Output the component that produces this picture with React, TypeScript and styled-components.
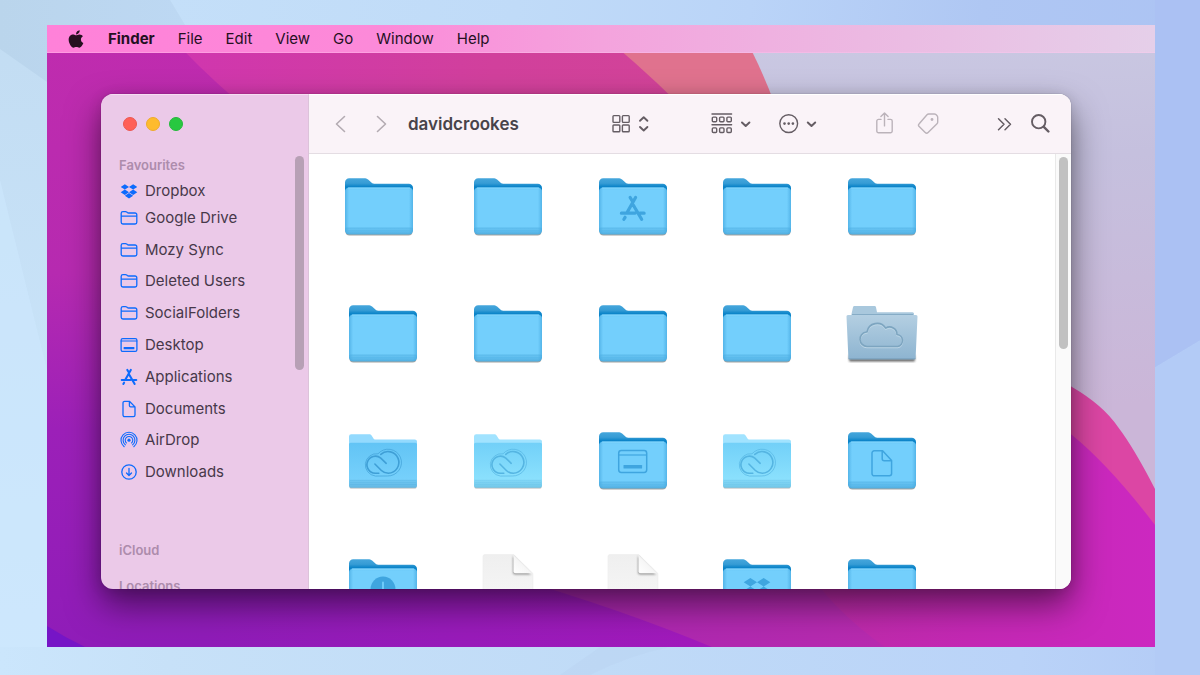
import React from "react";
import styled, { createGlobalStyle } from "styled-components";
import { FaApple } from "react-icons/fa";

const GlobalStyle = createGlobalStyle`
  *, *::before, *::after { box-sizing: border-box; }
  body {
    margin: 0;
    font-family: Inter, "Liberation Sans", sans-serif;
    -webkit-font-smoothing: antialiased;
  }
  button { font: inherit; color: inherit; background: none; border: 0; padding: 0; }
  ul { list-style: none; margin: 0; padding: 0; }
  a { color: inherit; text-decoration: none; }
  svg { display: block; flex: none; }
`;

/* ---------- page and desktop ---------- */

const Page = styled.div`
  position: relative;
  display: flex;
  height: 100vh;
  padding: 25px 45px 28px 47px;
  background: linear-gradient(98deg, #c6e1f9 0%, #c0dbf8 40%, #bad4f8 58%, #afc7f3 76%, #abc2f3 100%);
  overflow: hidden;
`;

const Backdrop = styled.svg`
  position: absolute;
  inset: 0;
  width: 100%;
  height: 100%;
`;

const Defs = styled.svg`
  position: absolute;
  width: 0;
  height: 0;
`;

const Desktop = styled.div`
  position: relative;
  flex: 1;
  display: flex;
  flex-direction: column;
  min-width: 0;
  overflow: hidden;
`;

const MenuBar = styled.header`
  position: relative;
  display: flex;
  align-items: center;
  gap: 23px;
  flex: none;
  height: 28px;
  padding: 0 20px;
  color: #25101f;
  font-size: 15px;
  line-height: 20px;
  background: linear-gradient(90deg, #ff81d9 0%, #fc8ad9 30%, #f4a3dd 50%, #ecb9e2 74%, #e5cfe9 100%);
  border-bottom: 1px solid rgba(255, 200, 240, 0.35);
`;

const AppleButton = styled.button`
  display: flex;
  justify-content: center;
  width: 18px;
`;

const MenuButton = styled.button<{ $strong?: boolean }>`
  font-weight: ${(p) => (p.$strong ? 700 : 400)};
`;

const Window = styled.section`
  position: relative;
  flex: 1;
  display: flex;
  min-height: 0;
  margin: 41px 84px 58px 54px;
  border-radius: 12px;
  box-shadow:
    0 0 1px rgba(0, 0, 0, 0.5),
    0 16px 34px rgba(0, 0, 0, 0.5),
    0 2px 14px rgba(0, 0, 0, 0.12);
`;

const WindowBody = styled.div`
  flex: 1;
  display: flex;
  min-width: 0;
  border-radius: inherit;
  overflow: hidden;
`;

/* ---------- sidebar ---------- */

const Sidebar = styled.aside`
  display: flex;
  flex-direction: column;
  flex: none;
  width: 208px;
  background: #ebc9e8;
  border-top: 1px solid #f5dff2;
  border-right: 1px solid #dcc3da;
`;

const TrafficLights = styled.div`
  display: flex;
  align-items: center;
  gap: 9px;
  flex: none;
  height: 58px;
  padding-left: 22px;
`;

const Light = styled.button<{ $fill: string; $edge: string }>`
  width: 14px;
  height: 14px;
  border-radius: 50%;
  background: ${(p) => p.$fill};
  border: 1px solid ${(p) => p.$edge};
`;

const SidebarScroll = styled.div`
  flex: 1;
  display: flex;
  justify-content: space-between;
  min-height: 0;
  padding: 3px 4px 0 18px;
  overflow: hidden;
`;

const Thumb = styled.div<{ $tone: string; $size: string }>`
  flex: none;
  width: 9px;
  height: ${(p) => p.$size};
  border-radius: 5px;
  background: ${(p) => p.$tone};
`;

const SectionTitle = styled.h2<{ $space?: number }>`
  margin: ${(p) => p.$space ?? 0}px 0 0;
  font-size: 13px;
  line-height: 18px;
  font-weight: 600;
  color: #ad8cac;
`;

const PlaceLink = styled.a`
  display: flex;
  align-items: center;
  gap: 7px;
  height: 100%;
  padding-left: 1px;
  font-size: 15px;
  line-height: 20px;
  color: #47384a;
  white-space: nowrap;

  svg { color: #0d6bfd; }
`;

const PinnedPlace = styled.div`
  height: 22px;
  margin-top: 6px;
`;

const PlaceList = styled.ul`
  display: grid;
  grid-template-rows: repeat(9, 1fr);
  height: 286px;
`;

/* ---------- main pane ---------- */

const Main = styled.main`
  flex: 1;
  display: flex;
  flex-direction: column;
  min-width: 0;
  background: #fff;
`;

const Toolbar = styled.div`
  display: flex;
  align-items: center;
  flex: none;
  height: 60px;
  padding: 0 21px 0 26px;
  background: #faf3f8;
  border-top: 1px solid #fff;
  border-bottom: 1px solid #e4dde3;
  color: #655d64;
`;

const HistoryButtons = styled.div`
  display: flex;
  gap: 30px;
  color: #b3abb2;
`;

const FolderTitle = styled.h1`
  flex: 1;
  margin: 0 0 0 21px;
  font-size: 17px;
  line-height: 22px;
  font-weight: 600;
  color: #48434a;
`;

const ToolGroups = styled.div`
  display: flex;
  gap: 58px;
`;

const ToolGroup = styled.div<{ $gap: number; $dim?: boolean }>`
  display: flex;
  align-items: center;
  gap: ${(p) => p.$gap}px;
  color: ${(p) => (p.$dim ? "#bbb3ba" : "inherit")};
`;

const Content = styled.div`
  flex: 1;
  display: flex;
  justify-content: space-between;
  min-height: 0;
  overflow: hidden;
`;

const FileGrid = styled.ul`
  display: grid;
  grid-template-columns: repeat(5, 76px);
  grid-auto-rows: 68px;
  row-gap: 59px;
  justify-content: space-between;
  align-content: start;
  align-items: center;
  justify-items: center;
  width: 575px;
  margin: 19px 0 0 36px;
`;

const FileItem = styled.li<{ $side?: string }>`
  justify-self: ${(p) => p.$side ?? "center"};
`;

const FileButton = styled.button`
  display: block;
`;

const ScrollTrack = styled.div`
  flex: none;
  width: 16px;
  padding: 3px 0 0 3px;
  background: #fafafa;
  border-left: 1px solid #e9e9e9;
`;

/* ---------- small icons ---------- */

const stroke = {
  fill: "none",
  stroke: "currentColor",
  strokeLinecap: "round" as const,
  strokeLinejoin: "round" as const,
};

const DROPBOX =
  "M6 1.8 0 5.6l6 3.85 6-3.85L6 1.8zM18 1.8l-6 3.8 6 3.85 6-3.85-6-3.8zM0 13.3l6 3.8 6-3.8-6-3.85-6 3.85zM18 9.45l-6 3.85 6 3.8 6-3.8-6-3.85zM6 18.4l6 3.8 6-3.8-6-3.85-6 3.85z";
const APPS =
  "M14.6 1.8 7 15.3M9.6 1.8 11.4 4.9M1.5 16.4H14M12.6 9 20.2 22M18.6 16.4H22.5M4.9 20.2 3.8 22";

const DropboxIcon = () => (
  <svg width="18" height="18" viewBox="-1 -1.5 26 26"><path d={DROPBOX} fill="currentColor" /></svg>
);
const FolderIcon = () => (
  <svg width="18" height="18" viewBox="0 0 18 18">
    <path {...stroke} strokeWidth="1.3" d="M1.2 4.2A1.7 1.7 0 0 1 2.9 2.6h2.6c.6 0 .9.1 1.3.5l.7.6c.3.2.5.3 1 .3h6.6a1.7 1.7 0 0 1 1.7 1.7v7.600a1.700 1.700 0 0 1-1.700 1.700H2.900a1.700 1.700 0 0 1-1.700-1.700zM1.200 7.200h15.600" />
  </svg>
);
const DesktopIcon = () => (
  <svg width="18" height="18" viewBox="0 0 18 18">
    <rect {...stroke} strokeWidth="1.300" x="1.100" y="2.600" width="15.800" height="12.800" rx="1.600" />
    <path {...stroke} strokeWidth="1.100" d="M1.200 5h15.600" />
    <rect x="3.600" y="11" width="10.800" height="2.300" rx=".5" fill="currentColor" />
  </svg>
);
const AppsIcon = () => (
  <svg width="18" height="18" viewBox="-1 -1 26 26"><path {...stroke} strokeWidth="3" d={APPS} /></svg>
);
const DocumentIcon = () => (
  <svg width="18" height="18" viewBox="0 0 18 18">
    <path {...stroke} strokeWidth="1.3" d="M4.600 1.300h4.800L15 6.900v8.200a1.600 1.600 0 0 1-1.600 1.600H4.600A1.600 1.600 0 0 1 3 15.100V2.900a1.600 1.600 0 0 1 1.600-1.600zM9.400 1.500v4a1.300 1.300 0 0 0 1.300 1.300h4" />
  </svg>
);
const AirDropIcon = () => (
  <svg width="18" height="18" viewBox="0 0 18 18">
    <g {...stroke} strokeWidth="1.1">
      <path d="M4.200 15.700a8 8 0 1 1 9.600 0" />
      <path d="M5.300 13.800a5.900 5.900 0 1 1 7.400 0" />
      <path d="M6.400 12a3.800 3.800 0 1 1 5.200 0" />
    </g>
    <circle cx="9" cy="9.200" r="1.600" fill="currentColor" />
  </svg>
);
const DownloadIcon = () => (
  <svg width="18" height="18" viewBox="0 0 18 18">
    <circle {...stroke} strokeWidth="1.3" cx="9" cy="9" r="7.200" />
    <path {...stroke} strokeWidth="1.3" d="M9 5.300v7M6.500 10 9 12.500 11.500 10" />
  </svg>
);

const Chevron = ({ flip }: { flip?: boolean }) => (
  <svg width="11" height="20" viewBox="0 0 11 20">
    <path {...stroke} strokeWidth="1.6" d={flip ? "M1.500 2.500 9.500 10 1.500 17.500" : "M9.500 2.500 1.500 10 9.500 17.500"} />
  </svg>
);
const GridViewIcon = () => (
  <svg width="41" height="22" viewBox="0 0 41 22">
    <g {...stroke} strokeWidth="1.4">
      <rect x="1" y="2.600" width="6.800" height="6.800" rx=".8" />
      <rect x="10.400" y="2.600" width="6.800" height="6.800" rx=".8" />
      <rect x="1" y="12" width="6.800" height="6.800" rx=".8" />
      <rect x="10.400" y="12" width="6.800" height="6.800" rx=".8" />
    </g>
    <path {...stroke} strokeWidth="1.9" d="M28 7.800 31.700 4.300 35.400 7.800M28 14 31.700 17.500 35.400 14" />
  </svg>
);
const GroupIcon = () => (
  <svg width="40" height="22" viewBox="0 0 40 22">
    <g {...stroke} strokeWidth="1.4">
      <path d="M1 1h19.600M1 11.800h19.600" />
      {[1.3, 8.6, 15.9].map((x) => (
        <React.Fragment key={x}>
          <rect x={x} y="4.100" width="4.400" height="4.600" rx="1" />
          <rect x={x} y="14.900" width="4.400" height="4.600" rx="1" />
        </React.Fragment>
      ))}
    </g>
    <path {...stroke} strokeWidth="2" d="M31 9.500 34.700 12.900 38.400 9.500" />
  </svg>
);
const ActionIcon = () => (
  <svg width="38" height="22" viewBox="0 0 38 22">
    <circle {...stroke} strokeWidth="1.4" cx="9.700" cy="10.600" r="8.900" />
    <g fill="currentColor">
      <circle cx="5.500" cy="10.600" r="1.300" />
      <circle cx="9.700" cy="10.600" r="1.300" />
      <circle cx="13.900" cy="10.600" r="1.300" />
    </g>
    <path {...stroke} strokeWidth="2" d="M28.800 9.500 32.500 12.900 36.200 9.500" />
  </svg>
);
const ShareIcon = () => (
  <svg width="18" height="24" viewBox="-1 0 18 24">
    <path {...stroke} strokeWidth="1.4" d="M5 7.400H2.500A1.700 1.700 0 0 0 .8 9.100v10a1.700 1.700 0 0 0 1.700 1.700h12a1.700 1.700 0 0 0 1.700-1.700v-10A1.700 1.700 0 0 0 14.500 7.400H12M8.500 13.900V1.200M4.900 4.600 8.500 1l3.600 3.600" />
  </svg>
);
const TagIcon = () => (
  <svg width="22" height="24" viewBox="0 0 22 24">
    <path {...stroke} strokeWidth="1.4" d="M11.600 2h5.700c.7 0 1.200.2 1.600.6l1.200 1.200c.4.4.6.9.6 1.600V10c0 .7-.2 1.200-.7 1.700l-8.900 8.900c-1 1-1.900 1-2.900 0l-6-6c-1-1-1-1.900 0-2.900L10 2.700c.5-.5.900-.7 1.600-.7z" />
    <circle cx="15" cy="7.500" r="1.400" fill="currentColor" />
  </svg>
);
const MoreIcon = () => (
  <svg width="15" height="22" viewBox="0 0 15 22">
    <path {...stroke} strokeWidth="1.5" d="M1.500 5.800 7 11.300 1.500 16.800M8 5.800l5.500 5.500L8 16.800" />
  </svg>
);
const SearchIcon = () => (
  <svg width="19" height="22" viewBox="0 0 19 22">
    <circle {...stroke} strokeWidth="1.9" cx="7.700" cy="8.700" r="6.700" />
    <path {...stroke} strokeWidth="2.4" d="m12.800 13.900 4.600 4.600" />
  </svg>
);

/* ---------- file icons ---------- */

const SharedDefs = () => (
  <Defs aria-hidden="true">
    <defs>
      <linearGradient id="back" x1="0" y1="0" x2="0" y2="1">
        <stop offset="0" stopColor="#45a6dc" />
        <stop offset=".1" stopColor="#369cd5" />
        <stop offset=".17" stopColor="#0a83c8" />
        <stop offset="1" stopColor="#0a83c8" />
      </linearGradient>
      <linearGradient id="front" x1="0" y1="0" x2="0" y2="1">
        <stop offset="0" stopColor="#6ac8f7" />
        <stop offset=".06" stopColor="#73cffc" />
        <stop offset=".85" stopColor="#73cffc" />
        <stop offset=".86" stopColor="#66c3f1" />
        <stop offset=".93" stopColor="#60bdee" />
        <stop offset="1" stopColor="#4fadde" />
      </linearGradient>
      <linearGradient id="sides" x1="0" y1="0" x2="1" y2="0">
        <stop offset="0" stopColor="#3fa3dc" stopOpacity=".6" />
        <stop offset=".06" stopColor="#3fa3dc" stopOpacity="0" />
        <stop offset=".94" stopColor="#3fa3dc" stopOpacity="0" />
        <stop offset="1" stopColor="#3fa3dc" stopOpacity=".6" />
      </linearGradient>
      <linearGradient id="creative" x1="0" y1="0" x2="0" y2="1">
        <stop offset="0" stopColor="#62c4f5" />
        <stop offset=".8" stopColor="#76d0fb" />
        <stop offset=".84" stopColor="#6fc7f2" />
        <stop offset="1" stopColor="#64b8e3" />
      </linearGradient>
      <linearGradient id="creativeLight" x1="0" y1="0" x2="0" y2="1">
        <stop offset="0" stopColor="#72d0f8" />
        <stop offset=".8" stopColor="#8ae0fd" />
        <stop offset=".84" stopColor="#82d7f6" />
        <stop offset="1" stopColor="#72c7e8" />
      </linearGradient>
      <linearGradient id="steel" x1="0" y1="0" x2="0" y2="1">
        <stop offset="0" stopColor="#b4cfe2" />
        <stop offset="1" stopColor="#8db4d0" />
      </linearGradient>
      <linearGradient id="paper" x1="0" y1="0" x2="0" y2="1">
        <stop offset="0" stopColor="#efefef" />
        <stop offset="1" stopColor="#f9f9f9" />
      </linearGradient>
      <linearGradient id="curl" x1="0" y1="1" x2="1" y2="0">
        <stop offset="0" stopColor="#ffffff" />
        <stop offset=".45" stopColor="#f6f6f6" />
        <stop offset=".6" stopColor="#dcdcdc" />
      </linearGradient>
      <filter id="soft" x="-20%" y="-20%" width="140%" height="140%">
        <feGaussianBlur stdDeviation="1" />
      </filter>
    </defs>
  </Defs>
);

const Folder = ({ children }: { children?: React.ReactNode }) => (
  <svg width="68" height="58" viewBox="0 0 68 58">
    <rect x=".5" y="30" width="67" height="27.500" rx="4" fill="#8a8580" opacity=".75" />
    <path fill="url(#back)" d="M0 4.500A4.200 4.200 0 0 1 4.200.3H19c1.800 0 2.800.3 4.100 1.300l3.300 2.800c1.200 1 2.300 1.300 3.900 1.300h33.500A4.200 4.200 0 0 1 68 9.900V50H0z" />
    <rect y="9.500" width="68" height="47" rx="4.200" fill="url(#front)" />
    <rect y="9.500" width="68" height="47" rx="4.200" fill="url(#sides)" />
    <path d="M3 10h62" stroke="#8fdcff" strokeWidth=".8" />
    <path d="M1 50h66M1 52.800h66" stroke="#53b3e5" strokeWidth=".6" />
    {children}
  </svg>
);

const glyph = "#3fa5df";

const AppsFolder = () => (
  <Folder>
    <g transform="translate(20.800 17.500)">
      <path d={APPS} transform="scale(1.080)" fill="none" stroke={glyph} strokeWidth="3" strokeLinecap="round" />
    </g>
  </Folder>
);
const DesktopFolder = () => (
  <Folder>
    <rect x="19.700" y="18.600" width="28" height="21.800" rx="2.600" fill="none" stroke={glyph} strokeWidth="1.500" />
    <path d="M19.700 23h28" stroke={glyph} strokeWidth="1.200" />
    <rect x="24.500" y="33" width="18.600" height="3.600" rx=".6" fill={glyph} />
  </Folder>
);
const DocumentsFolder = () => (
  <Folder>
    <path
      fill="none" stroke={glyph} strokeWidth="1.500" strokeLinejoin="round"
      d="M26.200 18.800h8.400l9 9.600v13.200a2.200 2.200 0 0 1-2.200 2.200H26.200A2.200 2.200 0 0 1 24 41.600V21a2.200 2.200 0 0 1 2.200-2.200zM34.200 19v7.700a2 2 0 0 0 2 2h7.300"
    />
  </Folder>
);
const DownloadsFolder = () => (
  <Folder>
    <circle cx="34" cy="30" r="12.400" fill={glyph} />
    <path d="M34 23.500v12M29 31.500l5 5 5-5" fill="none" stroke="#73cffc" strokeWidth="1.800" strokeLinecap="round" />
  </Folder>
);
const DropboxFolder = () => (
  <Folder>
    <g transform="translate(20.700 17)">
      <path d={DROPBOX} transform="scale(1.110)" fill={glyph} />
    </g>
  </Folder>
);

const CreativeFolder = ({ light }: { light?: boolean }) => {
  const ink = light ? "#55b5e2" : "#3f9fd6";
  return (
    <svg width="68" height="58" viewBox="0 0 68 58">
      <rect x=".5" y="40" width="67" height="16.500" rx="1.500" fill="#8f9598" opacity=".7" />
      <path fill={light ? "#a1e3ff" : "#93dafe"} d="M0 4.500A2.200 2.200 0 0 1 2.200 2.300H20c1.400 0 2 .3 2.600 1.200l1.900 2.900c.5.8 1 1 2 1h39.300A2.200 2.200 0 0 1 68 9.600V20H0z" />
      <path fill={light ? "url(#creativeLight)" : "url(#creative)"} d="M0 12.300A1.600 1.600 0 0 1 1.600 10.700h64.800a1.600 1.600 0 0 1 1.600 1.600v41.500a2 2 0 0 1-2 2H2a2 2 0 0 1-2-2z" />
      <path d="M1 48.500h66M1 50.500h66M1 52.500h66" stroke={ink} strokeWidth=".4" opacity=".45" />
      <g fill="none" stroke={ink} strokeLinecap="round">
        <path strokeWidth=".7" d="M26 44A11.200 11.200 0 1 1 29 21.800A13.400 13.400 0 1 1 38.700 44Z" />
        <path strokeWidth="1.600" d="M29.800 41.200H26.200A8.500 8.500 0 1 1 31.800 26.100L37.200 31.300" />
        <path strokeWidth="1.600" d="M31.800 22.400A10.800 10.800 0 1 1 39.300 41.200C36.500 41.200 34.300 40.400 32.400 38.500L25.900 32" />
      </g>
    </svg>
  );
};

const CLOUD =
  "M21 41.500a7.300 7.300 0 0 1-.9-14.500 6 6 0 0 1 .9-.1 10.200 10.200 0 0 1 18.700-3.700 7.300 7.300 0 0 1 11.300 6.300 6.100 6.100 0 0 1 .8 12z";

const CloudFolder = () => (
  <svg width="72" height="58" viewBox="0 0 72 58">
    <rect x="3" y="50" width="66" height="6.400" rx="1.500" fill="#333" opacity=".75" filter="url(#soft)" />
    <path fill="#a9c8dd" d="M5.500 9 7 2.200A1.500 1.500 0 0 1 8.500 1H28.500A1.500 1.500 0 0 1 30 2.200L31 7.200H66.500a1.500 1.500 0 0 1 1.500 1.500V14H5z" />
    <path d="M6 9.500H67" stroke="#86acc6" strokeWidth="1" />
    <path fill="url(#steel)" d="M.5 11.500A1.500 1.500 0 0 1 2 9.900H70a1.500 1.500 0 0 1 1.500 1.600L69.600 53a1.500 1.500 0 0 1-1.500 1.500H3.900A1.500 1.500 0 0 1 2.400 53z" />
    <path d="M2.600 53.600H69.400" stroke="#7ea5c1" strokeWidth="1" />
    <g fill="none" strokeLinejoin="round" strokeWidth="1.600">
      <path stroke="#bdd6e6" transform="translate(0 1)" d={CLOUD} />
      <path stroke="#7da5c0" d={CLOUD} />
    </g>
  </svg>
);

const BlankDocument = () => (
  <svg width="52" height="68" viewBox="0 0 52 68">
    <path d="M3 .5H31.500L51 19.500V65a2 2 0 0 1-2 2H3a2 2 0 0 1-2-2V2.500a2 2 0 0 1 2-2z" fill="url(#paper)" stroke="#ececec" strokeWidth=".6" />
    <path d="M31 2V18.500a2 2 0 0 0 2 2H49z" fill="#555" opacity=".6" filter="url(#soft)" />
    <path d="M31.500.8V17.200a2 2 0 0 0 2 2H50.500z" fill="url(#curl)" />
  </svg>
);

/* ---------- backgrounds ---------- */

const PageBackdrop = () => (
  <Backdrop viewBox="0 0 1200 675" preserveAspectRatio="none" aria-hidden="true">
    <defs>
      <linearGradient id="leftTone" x1="0" y1="0" x2="0" y2="1">
        <stop offset="0" stopColor="#c2dcf2" />
        <stop offset="1" stopColor="#cde8fd" />
      </linearGradient>
      <linearGradient id="topCorner" x1="0" y1="0" x2="1" y2="0">
        <stop offset="0" stopColor="#bad5ec" />
        <stop offset="1" stopColor="#bdd8f3" />
      </linearGradient>
      <linearGradient id="bottomTone" x1="0" y1="0" x2="1" y2="0">
        <stop offset="0" stopColor="#cbe6fc" />
        <stop offset=".14" stopColor="#c7e1f8" />
        <stop offset=".5" stopColor="#c0dbf7" />
        <stop offset=".85" stopColor="#bad3f8" />
        <stop offset="1" stopColor="#b3cbf6" />
      </linearGradient>
    </defs>
    <path d="M0 0H170L185 25 47 72V675H0z" fill="url(#leftTone)" />
    <path d="M0 0H170L185 25H47V82L0 49z" fill="url(#topCorner)" />
    <path d="M0 180 47 370V675H0z" fill="#cde8fd" opacity=".6" />
    <path d="M0 647H1200V675H0z" fill="url(#bottomTone)" />
    <path d="M590 675Q630 655 670 647H600L560 675z" fill="#b9d3f0" opacity=".4" />
    <path d="M1155 367 1200 340V675H1155z" fill="#b3cbf6" />
    <path d="M1155 0H1200V340L1155 367z" fill="#abc1f3" />
  </Backdrop>
);

const Wallpaper = () => (
  <Backdrop viewBox="47 25 1108 622" preserveAspectRatio="none" aria-hidden="true">
    <defs>
      <linearGradient id="sky" x1="0" y1="0" x2="0.100" y2="1">
        <stop offset="0" stopColor="#cccce4" />
        <stop offset=".3" stopColor="#c5c0de" />
        <stop offset=".7" stopColor="#cbb6d8" />
      </linearGradient>
      <linearGradient id="leftBody" x1="0" y1="0" x2="0" y2="1">
        <stop offset="0" stopColor="#c02cae" />
        <stop offset=".4" stopColor="#b62ab0" />
        <stop offset=".65" stopColor="#9c20b8" />
        <stop offset="1" stopColor="#8f1cb8" />
      </linearGradient>
      <linearGradient id="magenta" x1="0" y1="0" x2="1" y2="0">
        <stop offset="0" stopColor="#d035b0" />
        <stop offset=".65" stopColor="#d1409c" />
        <stop offset="1" stopColor="#d24398" />
      </linearGradient>
      <linearGradient id="lowLeft" x1="0" y1="0" x2="1" y2="0">
        <stop offset="0" stopColor="#8f1cb8" />
        <stop offset="1" stopColor="#a21abc" />
      </linearGradient>
      <linearGradient id="lowMid" x1="0" y1="0" x2="1" y2="0">
        <stop offset="0" stopColor="#a625b0" />
        <stop offset="1" stopColor="#b82bb0" />
      </linearGradient>
      <linearGradient id="lowRight" x1="0" y1="0" x2="1" y2="0">
        <stop offset="0" stopColor="#bb2ca6" />
        <stop offset=".5" stopColor="#c428b4" />
        <stop offset="1" stopColor="#cc28c0" />
      </linearGradient>
    </defs>
    <rect x="47" y="25" width="1108" height="622" fill="url(#sky)" />
    <path d="M600 25H738Q761 66 775 105V300H600z" fill="#e0728e" />
    <path d="M150 25H590Q634 60 680 105V300H150z" fill="url(#magenta)" />
    <path d="M47 25H160Q195 65 242 105V647H47z" fill="url(#leftBody)" />
    <path d="M1000 350Q1045 366 1072 387 1103 405 1118 427 1134 448 1155 489V647H900z" fill="#dc46a4" />
    <path d="M780 440 1000 400Q1040 410 1072 435 1110 466 1155 525V647H780z" fill="url(#lowRight)" />
    <path d="M450 560H800Q832 610 885 647H450z" fill="url(#lowMid)" />
    <path d="M200 560H450Q600 600 712 647H200z" fill="url(#lowLeft)" />
    <path d="M47 626Q66 638 85 647H47z" fill="#7615c6" />
  </Backdrop>
);

/* ---------- data ---------- */

const menus = ["Finder", "File", "Edit", "View", "Go", "Window", "Help"];

const places = [
  { name: "Google Drive", Icon: FolderIcon },
  { name: "Mozy Sync", Icon: FolderIcon },
  { name: "Deleted Users", Icon: FolderIcon },
  { name: "SocialFolders", Icon: FolderIcon },
  { name: "Desktop", Icon: DesktopIcon },
  { name: "Applications", Icon: AppsIcon },
  { name: "Documents", Icon: DocumentIcon },
  { name: "AirDrop", Icon: AirDropIcon },
  { name: "Downloads", Icon: DownloadIcon },
];

const files: { label: string; icon: React.ReactNode; side?: string }[] = [
  { label: "Folder", icon: <Folder />, side: "start" },
  { label: "Folder", icon: <Folder /> },
  { label: "Applications", icon: <AppsFolder /> },
  { label: "Folder", icon: <Folder /> },
  { label: "Folder", icon: <Folder /> },
  { label: "Folder", icon: <Folder /> },
  { label: "Folder", icon: <Folder /> },
  { label: "Folder", icon: <Folder /> },
  { label: "Folder", icon: <Folder /> },
  { label: "Cloud folder", icon: <CloudFolder /> },
  { label: "Creative Cloud", icon: <CreativeFolder /> },
  { label: "Creative Cloud", icon: <CreativeFolder light /> },
  { label: "Desktop", icon: <DesktopFolder /> },
  { label: "Creative Cloud", icon: <CreativeFolder light /> },
  { label: "Documents", icon: <DocumentsFolder /> },
  { label: "Downloads", icon: <DownloadsFolder /> },
  { label: "Document", icon: <BlankDocument /> },
  { label: "Document", icon: <BlankDocument /> },
  { label: "Dropbox", icon: <DropboxFolder /> },
  { label: "Folder", icon: <Folder /> },
];

export default function App() {
  return (
    <Page>
      <GlobalStyle />
      <SharedDefs />
      <PageBackdrop />
      <Desktop>
        <Wallpaper />
        <MenuBar>
          <AppleButton type="button" aria-label="Apple">
            <FaApple size={20} />
          </AppleButton>
          {menus.map((name, i) => (
            <MenuButton key={name} type="button" $strong={i === 0}>{name}</MenuButton>
          ))}
        </MenuBar>
        <Window>
          <WindowBody>
            <Sidebar>
              <TrafficLights>
                <Light type="button" aria-label="Close" $fill="#ff5f57" $edge="#ec5751" />
                <Light type="button" aria-label="Minimise" $fill="#febb2e" $edge="#eeab2c" />
                <Light type="button" aria-label="Zoom" $fill="#28c840" $edge="#24b93b" />
              </TrafficLights>
              <SidebarScroll>
                <nav>
                  <SectionTitle>Favourites</SectionTitle>
                  <PinnedPlace>
                    <PlaceLink href="#dropbox"><DropboxIcon />Dropbox</PlaceLink>
                  </PinnedPlace>
                  <PlaceList>
                    {places.map(({ name, Icon }) => (
                      <li key={name}>
                        <PlaceLink href={"#" + name.toLowerCase().replace(" ", "-")}><Icon />{name}</PlaceLink>
                      </li>
                    ))}
                  </PlaceList>
                  <SectionTitle $space={53}>iCloud</SectionTitle>
                  <SectionTitle $space={18}>Locations</SectionTitle>
                </nav>
                <Thumb $tone="#b7a0b5" $size="214px" />
              </SidebarScroll>
            </Sidebar>
            <Main>
              <Toolbar>
                <HistoryButtons>
                  <button type="button" aria-label="Back"><Chevron /></button>
                  <button type="button" aria-label="Forward"><Chevron flip /></button>
                </HistoryButtons>
                <FolderTitle>davidcrookes</FolderTitle>
                <ToolGroups>
                  <ToolGroup $gap={0}>
                    <button type="button" aria-label="View"><GridViewIcon /></button>
                  </ToolGroup>
                  <ToolGroup $gap={28}>
                    <button type="button" aria-label="Group"><GroupIcon /></button>
                    <button type="button" aria-label="Actions"><ActionIcon /></button>
                  </ToolGroup>
                  <ToolGroup $gap={24} $dim>
                    <button type="button" aria-label="Share"><ShareIcon /></button>
                    <button type="button" aria-label="Tags"><TagIcon /></button>
                  </ToolGroup>
                  <ToolGroup $gap={19}>
                    <button type="button" aria-label="More"><MoreIcon /></button>
                    <button type="button" aria-label="Search"><SearchIcon /></button>
                  </ToolGroup>
                </ToolGroups>
              </Toolbar>
              <Content>
                <FileGrid>
                  {files.map((file, i) => (
                    <FileItem key={i} $side={file.side}>
                      <FileButton type="button" aria-label={file.label}>{file.icon}</FileButton>
                    </FileItem>
                  ))}
                </FileGrid>
                <ScrollTrack>
                  <Thumb $tone="#c1c1c1" $size="192px" />
                </ScrollTrack>
              </Content>
            </Main>
          </WindowBody>
        </Window>
      </Desktop>
    </Page>
  );
}
